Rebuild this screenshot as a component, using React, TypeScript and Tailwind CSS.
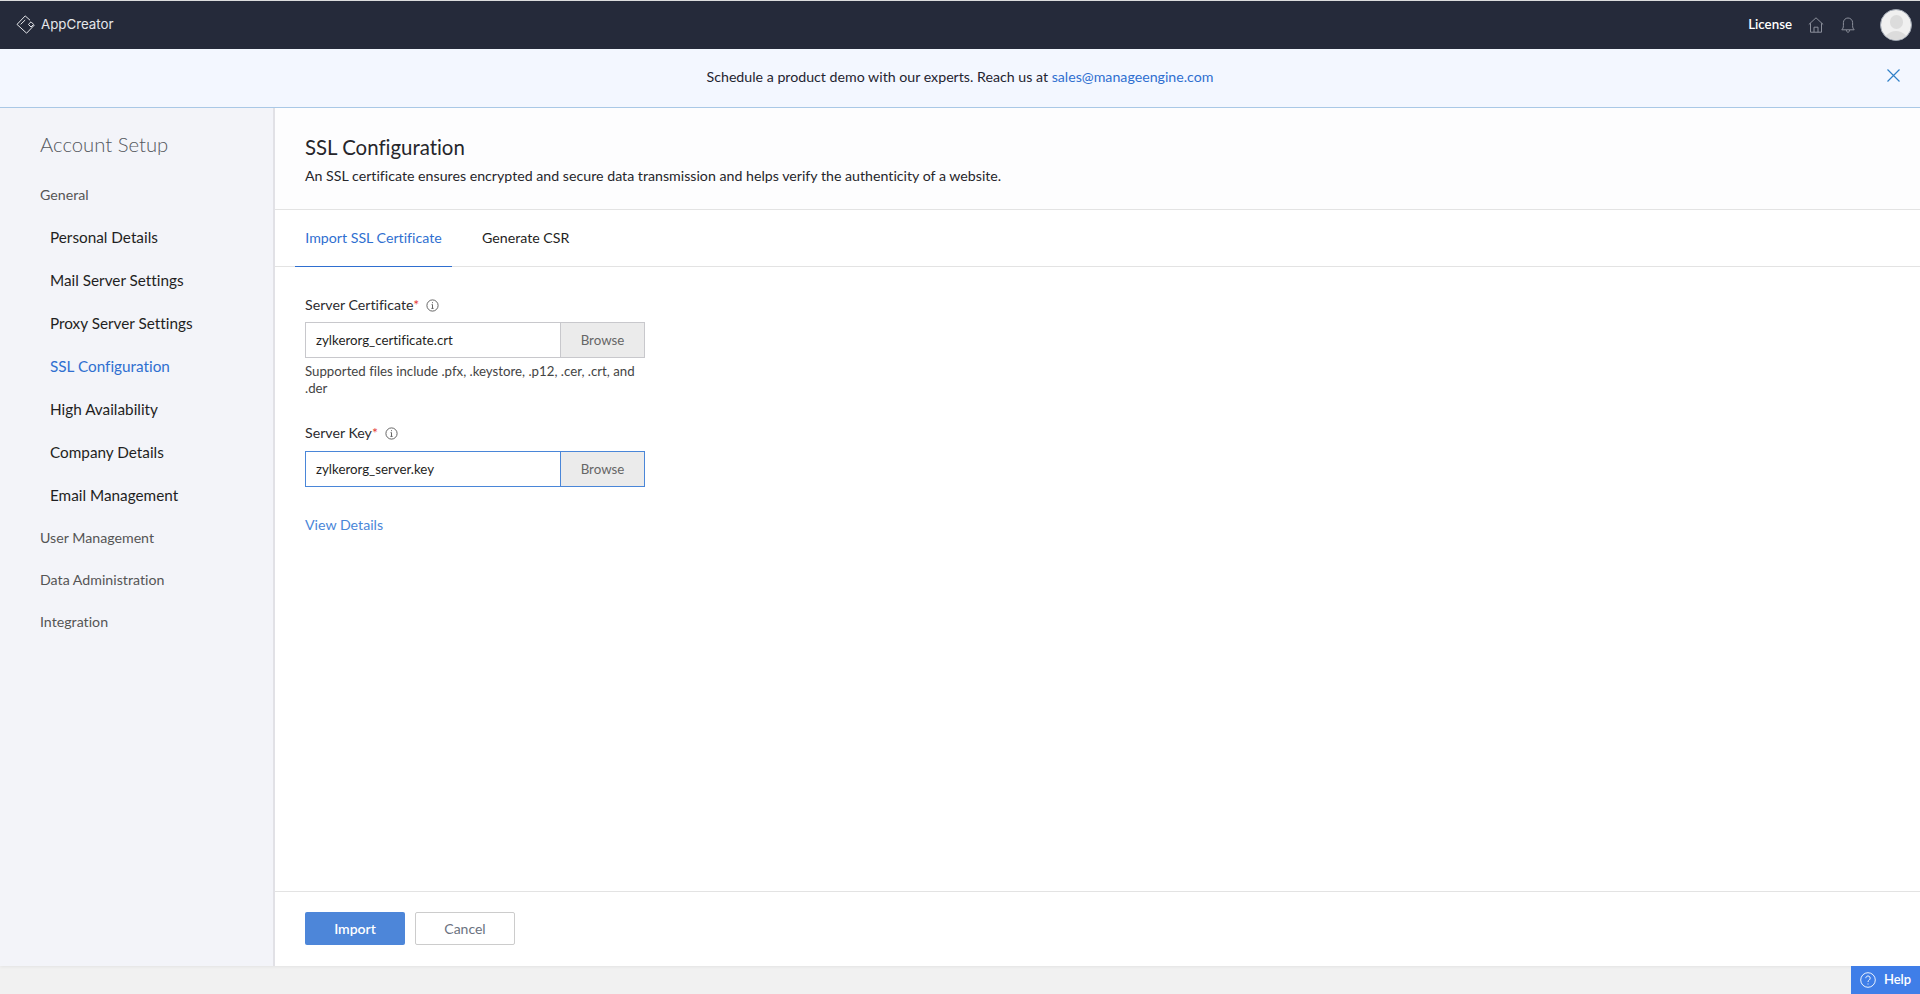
import React from "react";

const font = { fontFamily: "Lato, sans-serif" };

function Logo() {
  return (
    <svg width="20" height="20" viewBox="0 0 20 20" fill="none" stroke="#e5e7eb" strokeWidth="1">
      <path d="M14 5.2 9.2.9 1 9.4l9.6 8.8 7.8-8.2" />
      <path d="M4.6 9.4 9.2 5" />
      <path d="M15 6.8 17.6 9.4 15 12l-2.6-2.6z" />
    </svg>
  );
}

function HomeIcon() {
  return (
    <svg width="16" height="16" viewBox="0 0 16 16" fill="none" stroke="#8b8f9b" strokeWidth="1">
      <path d="M.8 7.5 8 .8l7.2 6.7" />
      <path d="M2.5 6.2v9h11v-9" />
      <path d="M6 15.2v-5h4v5" />
    </svg>
  );
}

function BellIcon() {
  return (
    <svg width="14" height="16" viewBox="0 0 14 16" fill="none" stroke="#8b8f9b" strokeWidth="1">
      <path d="M.8 12.8c1.1-1.1 1.6-2.2 1.6-4.2V5.6a4.6 4.6 0 0 1 9.2 0v3c0 2 .5 3.1 1.6 4.2z" />
      <path d="M5.4 13c0 1.3.6 2.2 1.6 2.2s1.6-.9 1.6-2.2" />
    </svg>
  );
}

function Avatar() {
  return (
    <div className="w-[32px] h-[32px] rounded-full border border-[#9ca3af] bg-[#f0f0f0] overflow-hidden flex flex-col items-center">
      <div className="w-[13px] h-[14px] rounded-full bg-[#dcdcdc] mt-[5px] shrink-0" />
      <div className="w-[26px] h-[14px] rounded-t-full bg-[#dcdcdc] mt-[2px] shrink-0" />
    </div>
  );
}

function InfoIcon() {
  return (
    <svg width="13" height="13" viewBox="0 0 13 13" fill="none" stroke="#555" strokeWidth="0.9">
      <circle cx="6.5" cy="6.5" r="5.6" />
      <path d="M6.5 5.6v3.8M5.4 9.4h2.2M5.6 5.6h.9" />
      <path d="M6.5 3.2v1" />
    </svg>
  );
}

function Field({ label, value, focused }: { label: string; value: string; focused?: boolean }) {
  const border = focused ? "border-[#4a86d8]" : "border-[#c8c8cc]";
  return (
    <div>
      <div className="flex items-center h-[18px] text-[14.2px] text-[#2c2c30]">
        <span>
          {label}
          <span className="text-[#e53935]">*</span>
        </span>
        <span className="ml-[7px] flex">
          <InfoIcon />
        </span>
      </div>
      <div className={`${focused ? "mt-[9px]" : "mt-[8px]"} flex w-[340px] h-[36px] border ${border}`}>
        <div className={`flex-1 bg-white flex items-center pl-[10px] pt-[1px] text-[13.3px] text-[#1f1f23] border-r ${border}`}>{value}</div>
        <div className="w-[83px] bg-[#ebebeb] flex items-center justify-center pt-[1px] text-[13.3px] text-[#666]">Browse</div>
      </div>
    </div>
  );
}

export default function App() {
  const items = [
    "Personal Details",
    "Mail Server Settings",
    "Proxy Server Settings",
    "SSL Configuration",
    "High Availability",
    "Company Details",
    "Email Management",
  ];
  return (
    <div style={font} className="w-[1920px] h-[994px] flex flex-col overflow-hidden bg-[#f1f1f1] [font-variant-ligatures:none]">
      <header className="h-[49px] shrink-0 bg-[#252a3a] border-t border-[#dcdcdc] flex items-center pl-[16px] pr-[8px]">
        <Logo />
        <span className="ml-[5px] text-[13.3px] text-[#e5e7eb]" style={{ fontFamily: "Inter, sans-serif" }}>AppCreator</span>
        <div className="ml-auto flex items-center">
          <span className="text-[13.3px] font-semibold text-white">License</span>
          <span className="ml-[16px] flex"><HomeIcon /></span>
          <span className="ml-[17px] flex"><BellIcon /></span>
          <span className="ml-[25px] flex"><Avatar /></span>
        </div>
      </header>

      <div className="h-[59px] shrink-0 bg-[#f3f7ff] border-b border-[#a9c8e6] flex items-center justify-center relative pb-[3px] text-[14.2px] text-[#1f2430]">
        <span>
          Schedule a product demo with our experts. Reach us at <span className="text-[#2f6fd0]">sales@manageengine.com</span>
        </span>
        <svg className="absolute right-[20px] top-[20px]" width="13" height="13" viewBox="0 0 13 13" stroke="#2f80c8" strokeWidth="1.2" fill="none">
          <path d="M.5.5l12 12M12.5.5l-12 12" />
        </svg>
      </div>

      <div className="h-[858px] shrink-0 flex shadow-[0_1px_3px_rgba(0,0,0,0.06)]">
        <aside className="w-[275px] shrink-0 bg-[#f3f4f9] border-r-2 border-[#e1e1e6] pl-[40px]">
          <div className="mt-[22px] text-[20.3px] font-light text-[#55585f] leading-[28px]">Account Setup</div>
          <div className="mt-[27px] text-[14.2px] text-[#555] h-[20px] leading-[20px]">General</div>
          <div className="mt-[11px] pl-[10px] flex flex-col">
            {items.map((t) => (
              <div key={t} className={`h-[43px] flex items-center text-[15.3px] ${t === "SSL Configuration" ? "text-[#2f6fd0]" : "text-[#1f1f23]"}`}>
                {t}
              </div>
            ))}
          </div>
          <div className="flex flex-col text-[14.2px] text-[#555]">
            {["User Management", "Data Administration", "Integration"].map((t) => (
              <div key={t} className="h-[42px] flex items-center">{t}</div>
            ))}
          </div>
        </aside>

        <main className="flex-1 bg-white flex flex-col">
          <div className="h-[102px] shrink-0 border-b border-[#e3e3e3] pl-[30px] pt-[26px] bg-[#fdfdfe]">
            <div className="text-[20.4px] leading-[26px] text-[#26262b]">SSL Configuration</div>
            <div className="mt-[6px] text-[14.2px] leading-[20px] text-[#26262b]">An SSL certificate ensures encrypted and secure data transmission and helps verify the authenticity of a website.</div>
          </div>
          <div className="h-[57px] shrink-0 border-b border-[#e3e3e3] flex pl-[20px] text-[14.2px]">
            <div className="w-[157px] h-[57px] flex items-center justify-center pb-[1px] text-[#2f6fd0] border-b border-[#2f6fd0]">Import SSL Certificate</div>
            <div className="ml-[30px] flex items-center pb-[1px] text-[#1f1f23]">Generate CSR</div>
          </div>
          <div className="flex-1 pl-[30px] pt-[29px]">
            <Field label="Server Certificate" value="zylkerorg_certificate.crt" />
            <div className="mt-[5px] w-[340px] text-[13.25px] leading-[17px] text-[#444] pr-[8px]">
              Supported files include .pfx, .keystore, .p12, .cer, .crt, and .der
            </div>
            <div className="mt-[27px]">
              <Field label="Server Key" value="zylkerorg_server.key" focused />
            </div>
            <div className="mt-[29px] text-[14.2px] leading-[18px] text-[#4a86d8]">View Details</div>
          </div>
          <div className="h-[75px] shrink-0 border-t border-[#e3e3e3] flex items-start pl-[30px] pt-[20px] gap-[10px] text-[14px]">
            <div className="w-[100px] h-[33px] bg-[#4d86d9] rounded-[2px] text-white font-semibold flex items-center justify-center">Import</div>
            <div className="w-[100px] h-[33px] bg-white border border-[#cccccc] rounded-[2px] text-[#6b7280] flex items-center justify-center">Cancel</div>
          </div>
        </main>
      </div>

      <div className="flex-1 relative">
        <div className="absolute right-0 bottom-0 w-[69px] h-[28px] bg-[#3f7ee8] text-white text-[13px] font-semibold flex items-center justify-center gap-[8px]">
          <svg width="16" height="16" viewBox="0 0 16 16" fill="none" stroke="#fff" strokeWidth="0.9">
            <circle cx="8" cy="8" r="7.3" />
            <path d="M5.8 6.2a2.2 2.2 0 1 1 3.4 1.8c-.8.5-1.2 1-1.2 2" />
            <path d="M8 11.5v1" />
          </svg>
          <span>Help</span>
        </div>
      </div>
    </div>
  );
}
